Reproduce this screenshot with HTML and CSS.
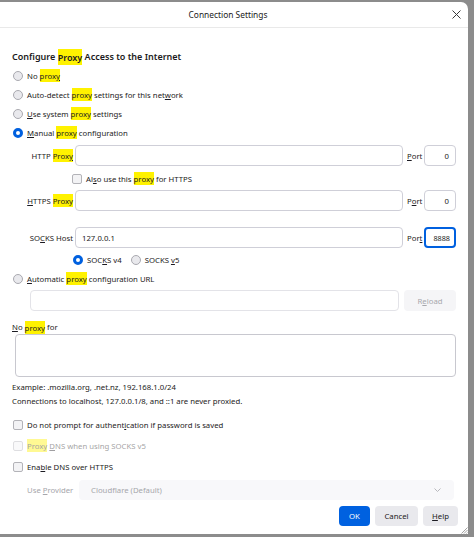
FILE: index.html
```html
<!DOCTYPE html>
<html>
<head>
<meta charset="utf-8">
<link rel="stylesheet" href="styles.css">
</head>
<body>
<div class="window">
  <div class="titlebar">
    <span></span>
    <span class="title">Connection Settings</span>
    <span class="close"><svg width="9" height="9" viewBox="0 0 9 9"><path d="M0.5 0.5L8.5 8.5M8.5 0.5L0.5 8.5" stroke="#3a3a3a" stroke-width="1"/></svg></span>
  </div>
  <div class="content">
    <div class="heading">Configure <mark>Proxy</mark> Access to the Internet</div>
    <div class="opt"><span class="radio"></span><span>No <mark>prox<u>y</u></mark></span></div>
    <div class="opt"><span class="radio"></span><span>Auto-detect <mark>proxy</mark> settings for this net<u>w</u>ork</span></div>
    <div class="opt"><span class="radio"></span><span><u>U</u>se system <mark>proxy</mark> settings</span></div>
    <div class="opt"><span class="radio on"></span><span><u>M</u>anual <mark>proxy</mark> configuration</span></div>

    <div class="proxy-row first">
      <span class="plabel">HTTP <mark>Prox<u>y</u></mark></span>
      <div class="input"></div>
      <span class="port-label"><u>P</u>ort</span>
      <div class="input port">0</div>
    </div>
    <div class="check-row indent"><span class="check"></span><span>Al<u>s</u>o use this <mark>proxy</mark> for HTTPS</span></div>
    <div class="proxy-row https">
      <span class="plabel"><u>H</u>TTPS <mark>Proxy</mark></span>
      <div class="input"></div>
      <span class="port-label">P<u>o</u>rt</span>
      <div class="input port">0</div>
    </div>
    <div class="proxy-row socks">
      <span class="plabel">SO<u>C</u>KS Host</span>
      <div class="input">127.0.0.1</div>
      <span class="port-label">Por<u>t</u></span>
      <div class="input port focus">8888</div>
    </div>
    <div class="socksv">
      <span class="radio on"></span><span>SOC<u>K</u>S v4</span>
      <span class="radio"></span><span>SOCKS <u>v</u>5</span>
    </div>
    <div class="opt"><span class="radio"></span><span><u>A</u>utomatic <mark>proxy</mark> configuration URL</span></div>
    <div class="url-row">
      <div class="input disabled"></div>
      <div class="reload">R<u>e</u>load</div>
    </div>
    <div class="noproxy-label"><u>N</u>o <mark>proxy</mark> for</div>
    <div class="textarea"></div>
    <div class="note first-note">Example: .mozilla.org, .net.nz, 192.168.1.0/24</div>
    <div class="note">Connections to localhost, 127.0.0.1/8, and ::1 are never proxied.</div>
    <div class="checks">
      <div class="check-row"><span class="check"></span><span>Do not prompt for authent<u>i</u>cation if password is saved</span></div>
      <div class="check-row dim"><span class="check"></span><span><mark>Proxy</mark> <u>D</u>NS when using SOCKS v5</span></div>
      <div class="check-row"><span class="check"></span><span>Ena<u>b</u>le DNS over HTTPS</span></div>
    </div>
    <div class="provider-row">
      <span class="provider-label">Use <u>P</u>rovider</span>
      <div class="select"><span>Cloudflare (Default)</span><svg width="7" height="4" viewBox="0 0 7 4"><path d="M0.5 0.5L3.5 3.5L6.5 0.5" fill="none" stroke="#b8b8bd" stroke-width="1"/></svg></div>
    </div>
    <div class="buttons">
      <div class="btn primary">OK</div>
      <div class="btn">Cancel</div>
      <div class="btn"><u>H</u>elp</div>
    </div>
  </div>
  <svg class="grip" width="8" height="8" viewBox="0 0 8 8"><path d="M7.5 1.5L1.5 7.5M7.5 4L4 7.5M7.5 6.5L6.5 7.5" stroke="#8a8a8a" stroke-width="0.8"/></svg>
</div>
</body>
</html>
```

FILE: styles.css
```css
* { box-sizing: border-box; }
html, body { margin: 0; padding: 0; }
body {
  width: 474px;
  height: 537px;
  overflow: hidden;
  background: #8c8c8c;
  font-family: "Noto Sans", "Open Sans", sans-serif;
  font-size: 7.75px;
  color: #1c1b22;
}
u { text-decoration: underline; text-underline-offset: 1px; }
mark { background: #fff200; color: inherit; padding: 1.5px 0; }

.window {
  position: relative;
  margin-top: 2px;
  width: 468px;
  height: 532px;
  background: #fff;
  border-top-right-radius: 7px;
}
.titlebar {
  height: 26px;
  border-bottom: 1px solid #e9e9e9;
  display: grid;
  grid-template-columns: 1fr auto 1fr;
  align-items: center;
  padding-right: 7px;
}
.title { font-size: 8.4px; margin-right: 5px; }
.close { justify-self: end; display: flex; }

.content { padding: 0 12px; }
.heading {
  margin-top: 22px;
  height: 14px;
  line-height: 14px;
  font-size: 9px;
  font-weight: 600;
}
.opt {
  display: flex;
  align-items: center;
  height: 19px;
  gap: 4px;
  padding-left: 1px;
}
.heading + .opt { margin-top: 2px; }
.radio {
  flex: none;
  width: 10px;
  height: 10px;
  border-radius: 50%;
  border: 1px solid #a9a9b0;
  background: #e9e9ed;
}
.radio.on { border: 3px solid #0060df; background: #fff; }

.proxy-row {
  display: grid;
  grid-template-columns: 63px 1fr 21px 32px;
  align-items: center;
  height: 21px;
}
.proxy-row.first { margin-top: 3px; }
.proxy-row.https { margin-top: 2px; }
.proxy-row.socks { margin-top: 16px; }
.plabel { text-align: right; padding-right: 2px; white-space: nowrap; }
.port-label { padding-left: 4px; }
.input {
  height: 21px;
  border: 1px solid #cfcfd8;
  border-radius: 4px;
  display: flex;
  align-items: center;
  padding: 0 6px;
}
.port { justify-content: flex-end; padding-right: 6px; }
.port.focus { border: 2px solid #0060df; padding-right: 4px; font-size: 7.25px; }
.input.disabled { border-color: #e3e3e8; }

.check-row {
  display: flex;
  align-items: center;
  gap: 4px;
  height: 19px;
  padding-left: 1px;
}
.check-row.indent { margin-top: 3px; padding-left: 60px; }
.check {
  flex: none;
  width: 10px;
  height: 10px;
  border: 1px solid #b3b3b8;
  border-radius: 2px;
  background: #f3f3f5;
}
.socksv {
  display: flex;
  align-items: center;
  height: 19px;
  margin-top: 2px;
  padding-left: 61px;
  gap: 4px;
}
.socksv .radio + span { margin-right: 5px; }

.url-row {
  display: flex;
  margin-top: 2px;
  padding-left: 18px;
  gap: 5px;
  height: 21px;
}
.url-row .input { flex: 1; }
.reload {
  width: 52px;
  background: #f5f5f7;
  border-radius: 4px;
  color: #a8a8ad;
  display: flex;
  align-items: center;
  justify-content: center;
}
.noproxy-label { margin-top: 9px; height: 14px; line-height: 14px; }
.textarea {
  margin-left: 3px;
  height: 43px;
  border: 1px solid #c8c8cf;
  border-radius: 4px;
}
.note { height: 14px; line-height: 14px; }
.first-note { margin-top: 3px; }

.checks { margin-top: 6px; }
.checks .check-row { height: 21px; }
.check-row.dim { opacity: 0.42; }

.provider-row {
  display: flex;
  align-items: center;
  margin-top: 3px;
  height: 20px;
  color: #a6a6ab;
}
.provider-label { width: 67px; padding-left: 15px; flex: none; }
.select {
  flex: 1;
  height: 20px;
  margin-right: 2px;
  background: #f8f8fa;
  border-radius: 4px;
  display: flex;
  align-items: center;
  justify-content: space-between;
  padding: 0 13px 0 12px;
}
.buttons {
  display: flex;
  justify-content: flex-end;
  gap: 5.5px;
  margin-top: 6px;
  margin-right: -2px;
  height: 20px;
}
.btn {
  min-width: 31px;
  padding: 0 9px;
  border-radius: 4px;
  background: #e9e9ed;
  display: flex;
  align-items: center;
  justify-content: center;
}
.btn.primary { background: #0061e0; color: #fff; }
.grip { position: absolute; right: 0; bottom: 0; }
```
